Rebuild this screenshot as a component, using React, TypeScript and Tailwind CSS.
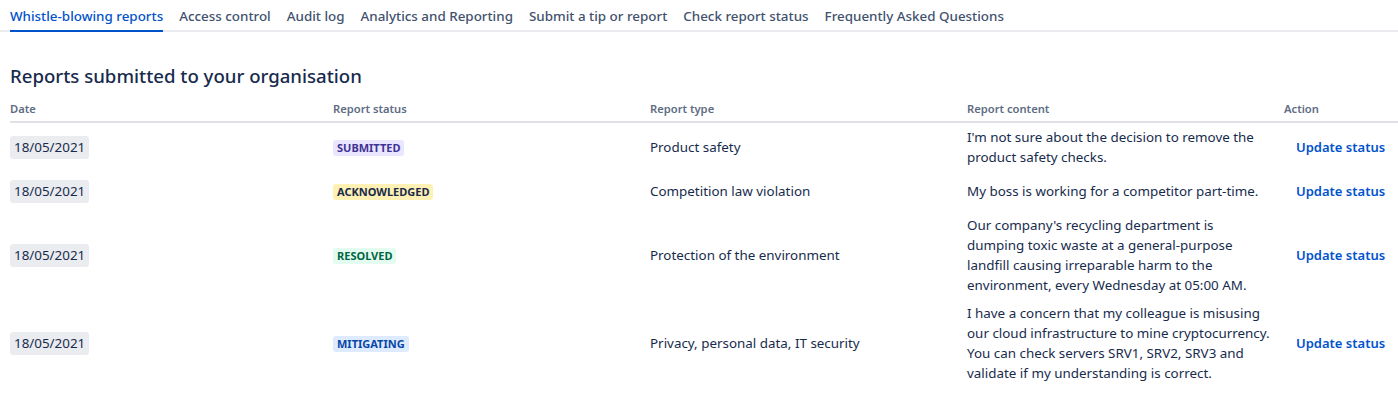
import React from 'react';

const tabs = [
  'Whistle-blowing reports',
  'Access control',
  'Audit log',
  'Analytics and Reporting',
  'Submit a tip or report',
  'Check report status',
  'Frequently Asked Questions',
];

type Status = 'SUBMITTED' | 'ACKNOWLEDGED' | 'RESOLVED' | 'MITIGATING';

const statusStyle: Record<Status, string> = {
  SUBMITTED: 'bg-[#EAE6FF] text-[#403294]',
  ACKNOWLEDGED: 'bg-[#FFF0B3] text-[#172B4D]',
  RESOLVED: 'bg-[#E3FCEF] text-[#006644]',
  MITIGATING: 'bg-[#DEEBFF] text-[#0747A6]',
};

const reports: { date: string; status: Status; type: string; content: string[] }[] = [
  {
    date: '18/05/2021',
    status: 'SUBMITTED',
    type: 'Product safety',
    content: ["I'm not sure about the decision to remove the", 'product safety checks.'],
  },
  {
    date: '18/05/2021',
    status: 'ACKNOWLEDGED',
    type: 'Competition law violation',
    content: ['My boss is working for a competitor part-time.'],
  },
  {
    date: '18/05/2021',
    status: 'RESOLVED',
    type: 'Protection of the environment',
    content: [
      "Our company's recycling department is",
      'dumping toxic waste at a general-purpose',
      'landfill causing irreparable harm to the',
      'environment, every Wednesday at 05:00 AM.',
    ],
  },
  {
    date: '18/05/2021',
    status: 'MITIGATING',
    type: 'Privacy, personal data, IT security',
    content: [
      'I have a concern that my colleague is misusing',
      'our cloud infrastructure to mine cryptocurrency.',
      'You can check servers SRV1, SRV2, SRV3 and',
      'validate if my understanding is correct.',
    ],
  },
];

const cols = 'grid grid-cols-[315px_317px_317px_317px_1fr]';

export default function App() {
  return (
    <div className="min-h-[394px] bg-white text-[#172B4D] font-['Noto_Sans','Open_Sans',sans-serif] text-[13.4px]">
      {/* tabs */}
      <div className="flex gap-[16px] pl-[10px] border-b-2 border-[#EBECF0]">
        {tabs.map((t, i) => (
          <div
            key={t}
            className={
              'pt-[6px] pb-[4px] leading-5 font-medium whitespace-nowrap -mb-[2px] border-b-2 ' +
              (i === 0 ? 'text-[#0052CC] border-[#0052CC]' : 'text-[#42526E] border-transparent')
            }
          >
            {t}
          </div>
        ))}
      </div>

      <h2 className="mt-[32px] pl-[10px] text-[18.6px] leading-6 font-medium text-[#172B4D]">
        Reports submitted to your organisation
      </h2>

      <div className="pl-[10px] mt-[13px]">
        <div className={cols + ' border-b-2 border-[#DFE1E6] text-[11.2px] font-semibold text-[#5E6C84] leading-4 pb-[4px]'}>
          <div>Date</div>
          <div className="pl-2">Report status</div>
          <div className="pl-2">Report type</div>
          <div className="pl-2">Report content</div>
          <div className="pl-2">Action</div>
        </div>

        {reports.map((r, i) => (
          <div key={i} className={cols + ' items-center py-1 leading-5'}>
            <div>
              <span className="inline-block bg-[#EBECF0] rounded-[3px] px-[4px] py-[1px] leading-[21px]">{r.date}</span>
            </div>
            <div className="pl-2">
              <span className={'inline-block rounded-[3px] px-[4px] text-[11px] font-bold leading-4 ' + statusStyle[r.status]}>
                {r.status}
              </span>
            </div>
            <div className="pl-2">{r.type}</div>
            <div className="pl-2 whitespace-nowrap">
              {r.content.map((l, j) => (
                <div key={j}>{l}</div>
              ))}
            </div>
            <div className="pl-2">
              <button className="h-8 px-3 text-[#0052CC] text-[13px] font-semibold whitespace-nowrap">Update status</button>
            </div>
          </div>
        ))}
      </div>
    </div>
  );
}
